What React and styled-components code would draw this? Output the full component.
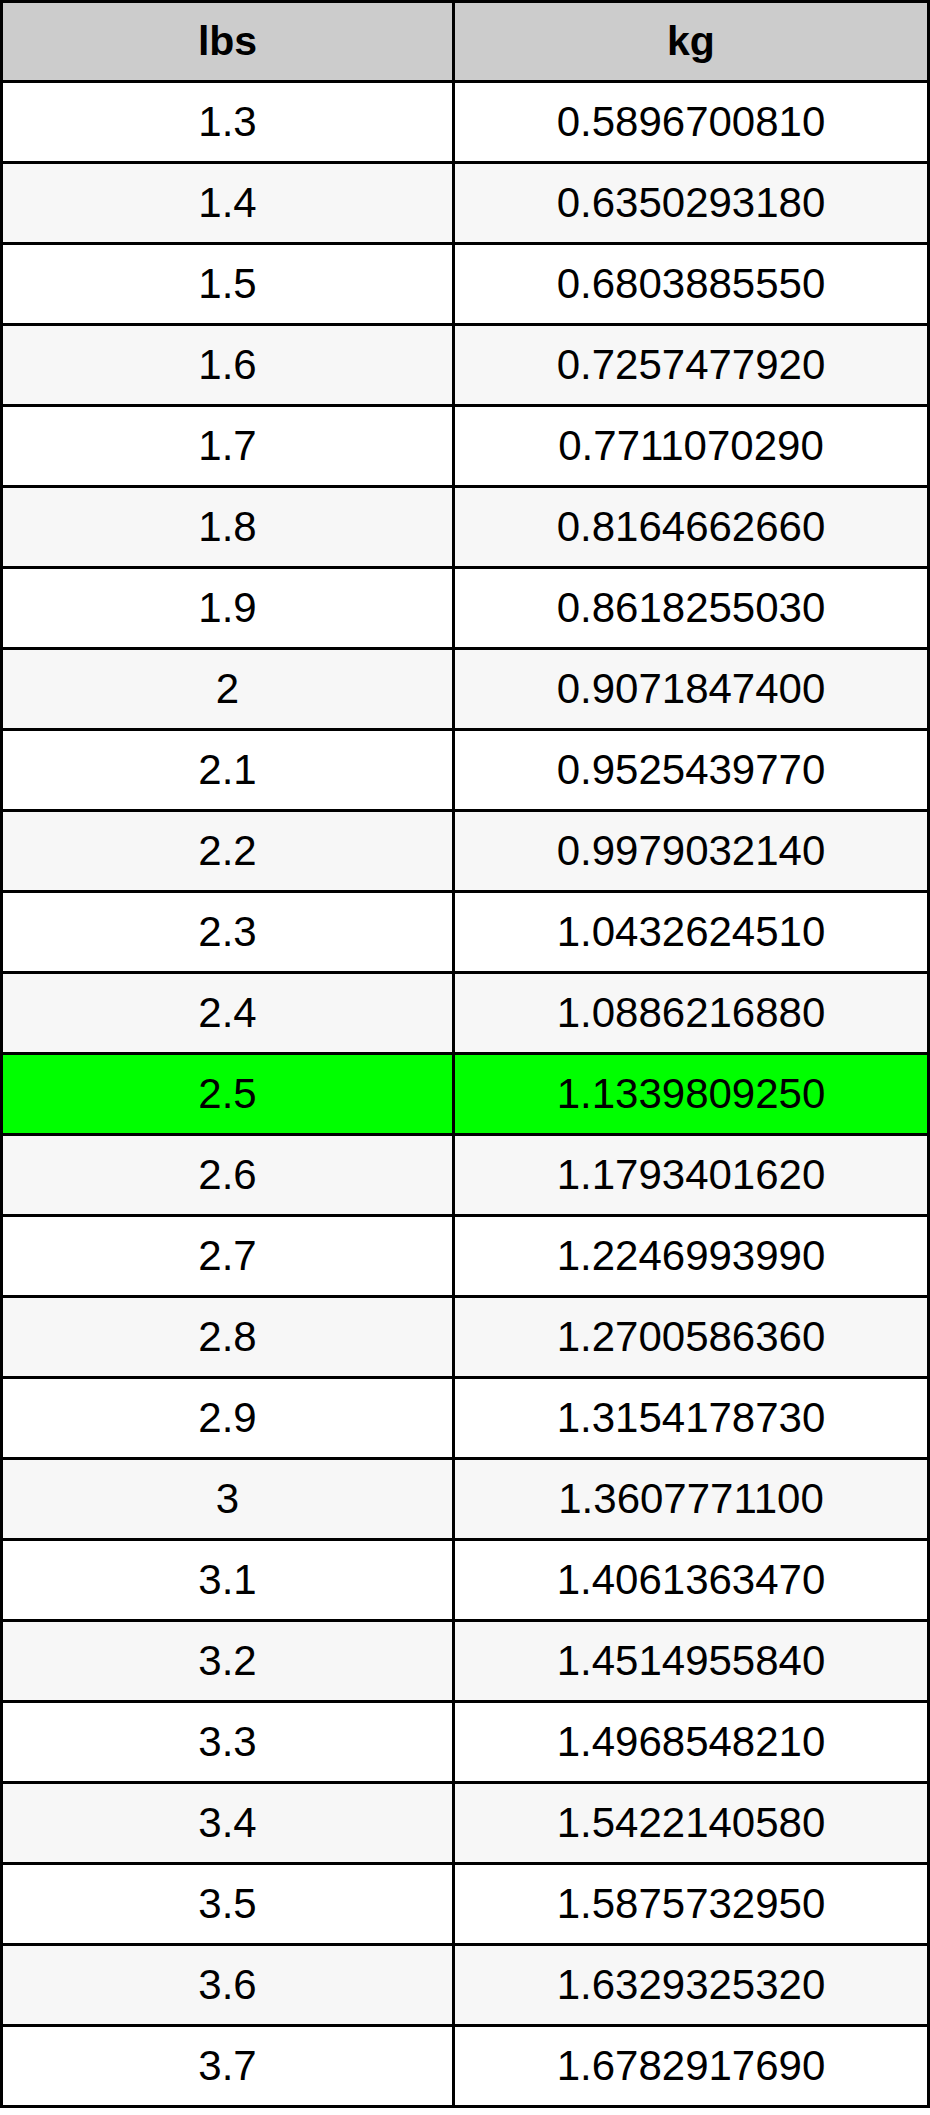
import React from 'react';
import styled, { createGlobalStyle } from 'styled-components';

const GlobalStyle = createGlobalStyle`
  html, body {
    margin: 0;
    padding: 0;
    background: #ffffff;
  }
`;

const Table = styled.table`
  border-collapse: separate;
  border-spacing: 0;
  border-top: 3px solid #000;
  border-left: 3px solid #000;
  width: 930px;
  table-layout: fixed;
  font-family: "Liberation Sans", Arial, sans-serif;
  color: #000;
`;

const HeadCell = styled.th`
  background: #cccccc;
  font-weight: bold;
  font-size: 41px;
  height: 77px;
  padding: 0;
  text-align: center;
  vertical-align: middle;
  border-right: 3px solid #000;
  border-bottom: 3px solid #000;
  width: ${({ $w }) => $w}px;
`;

const Cell = styled.td`
  background: ${({ $bg }) => $bg};
  font-size: 42px;
  height: 78px;
  padding: 0;
  text-align: center;
  vertical-align: middle;
  border-right: 3px solid #000;
  border-bottom: 3px solid #000;
`;

const rows = [
  ['1.3', '0.5896700810'],
  ['1.4', '0.6350293180'],
  ['1.5', '0.6803885550'],
  ['1.6', '0.7257477920'],
  ['1.7', '0.7711070290'],
  ['1.8', '0.8164662660'],
  ['1.9', '0.8618255030'],
  ['2', '0.9071847400'],
  ['2.1', '0.9525439770'],
  ['2.2', '0.9979032140'],
  ['2.3', '1.0432624510'],
  ['2.4', '1.0886216880'],
  ['2.5', '1.1339809250'],
  ['2.6', '1.1793401620'],
  ['2.7', '1.2246993990'],
  ['2.8', '1.2700586360'],
  ['2.9', '1.3154178730'],
  ['3', '1.3607771100'],
  ['3.1', '1.4061363470'],
  ['3.2', '1.4514955840'],
  ['3.3', '1.4968548210'],
  ['3.4', '1.5422140580'],
  ['3.5', '1.5875732950'],
  ['3.6', '1.6329325320'],
  ['3.7', '1.6782917690'],
];

const rowColor = (lbs, i) => {
  if (lbs === '2.5') return '#00ff00';
  return i % 2 === 0 ? '#ffffff' : '#f7f7f7';
};

export default function App() {
  return (
    <>
      <GlobalStyle />
      <Table>
        <thead>
          <tr>
            <HeadCell $w={449}>lbs</HeadCell>
            <HeadCell $w={472}>kg</HeadCell>
          </tr>
        </thead>
        <tbody>
          {rows.map(([lbs, kg], i) => (
            <tr key={lbs}>
              <Cell $bg={rowColor(lbs, i)}>{lbs}</Cell>
              <Cell $bg={rowColor(lbs, i)}>{kg}</Cell>
            </tr>
          ))}
        </tbody>
      </Table>
    </>
  );
}
